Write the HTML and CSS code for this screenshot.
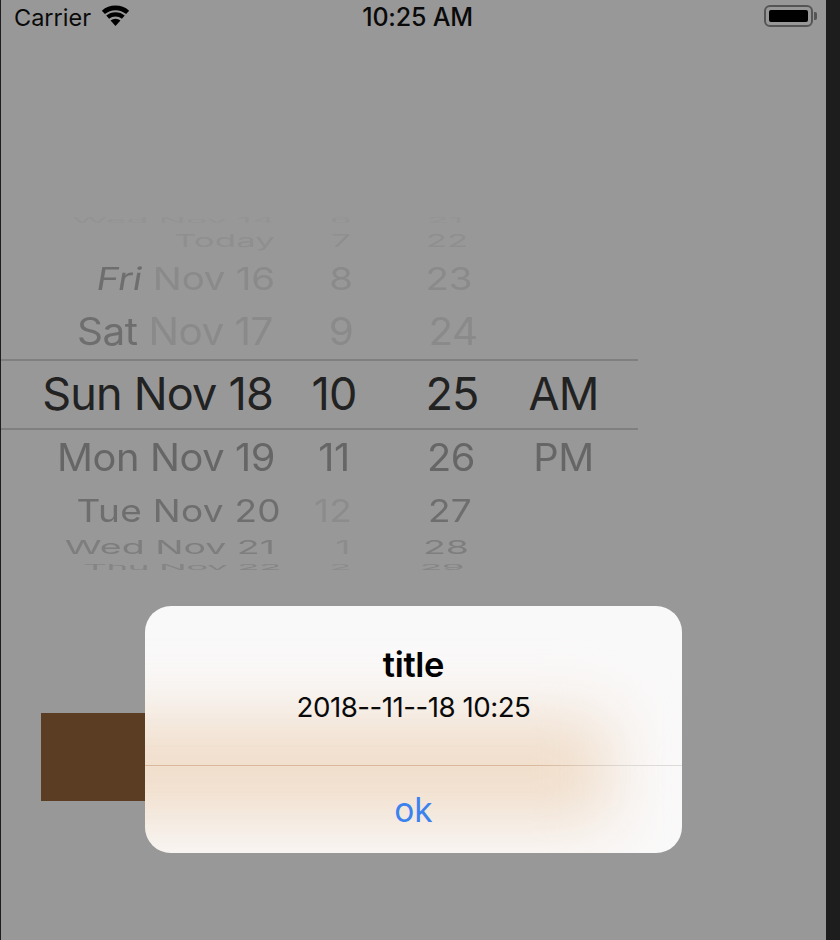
FILE: index.html
```html
<!DOCTYPE html>
<html lang="en">
<head>
<meta charset="utf-8">
<title>Date picker alert</title>
<link rel="stylesheet" href="styles.css">
</head>
<body>
<div class="screen">
  <header class="status">
    <div class="status-left">
      <span>Carrier</span>
      <svg class="wifi" viewBox="0 0 30 22" aria-hidden="true">
        <path d="M15 22 9.800 16.200a8 8 0 0 1 10.400 0z"/>
        <path d="M8.300 14.500 5.300 11.100a15 15 0 0 1 19.400 0l-3 3.400a10.500 10.500 0 0 0-13.400 0z"/>
        <path d="M3.900 9.500.7 5.900a22 22 0 0 1 28.600 0l-3.200 3.600a17.200 17.200 0 0 0-22.200 0z"/>
      </svg>
    </div>
    <div class="status-time">10:25 AM</div>
    <div class="status-right">
      <span class="battery"><span class="battery-fill"></span></span><span class="battery-tip"></span>
    </div>
  </header>

  <section class="picker">
    <div class="row r-clip-top">
      <span class="cell date faint">Wed Nov 14</span><span class="cell hour faint">6</span><span class="cell minute faint">21</span><span class="cell ampm"></span>
    </div>
    <div class="row r-today">
      <span class="cell date faint">Today</span><span class="cell hour faint">7</span><span class="cell minute faint">22</span><span class="cell ampm"></span>
    </div>
    <div class="row r-fri">
      <span class="cell date"><i class="day skew">Fri</i> <span class="mon">Nov 16</span></span><span class="cell hour mon">8</span><span class="cell minute mon">23</span><span class="cell ampm"></span>
    </div>
    <div class="row r-sat">
      <span class="cell date"><span class="day">Sat</span> <span class="mon">Nov 17</span></span><span class="cell hour mon">9</span><span class="cell minute mon">24</span><span class="cell ampm"></span>
    </div>
    <div class="row r-sel">
      <span class="cell date">Sun Nov 18</span><span class="cell hour">10</span><span class="cell minute">25</span><span class="cell ampm">AM</span>
    </div>
    <div class="row r-mon">
      <span class="cell date">Mon Nov 19</span><span class="cell hour">11</span><span class="cell minute">26</span><span class="cell ampm">PM</span>
    </div>
    <div class="row r-tue">
      <span class="cell date">Tue Nov 20</span><span class="cell hour light">12</span><span class="cell minute">27</span><span class="cell ampm"></span>
    </div>
    <div class="row r-wed">
      <span class="cell date">Wed Nov 21</span><span class="cell hour light">1</span><span class="cell minute">28</span><span class="cell ampm"></span>
    </div>
    <div class="row r-clip-bottom">
      <span class="cell date">Thu Nov 22</span><span class="cell hour light">2</span><span class="cell minute">29</span><span class="cell ampm"></span>
    </div>
  </section>

  <div class="block"></div>

  <div class="alert" role="alertdialog">
    <div class="alert-glow"></div>
    <div class="alert-body">
      <h1 class="alert-title">title</h1>
      <p class="alert-message">2018--11--18 10:25</p>
    </div>
    <div class="alert-divider"></div>
    <div class="alert-action">ok</div>
  </div>
</div>
</body>
</html>
```

FILE: styles.css
```css
* { box-sizing: border-box; }

html, body {
  margin: 0;
  height: 100%;
  background: #1d1d1d;
}

body {
  padding: 0 14px 0 1px;
  overflow: hidden;
  font-family: Inter, "Liberation Sans", sans-serif;
}

.screen {
  position: relative;
  height: 940px;
  background: #989898;
  color: #000;
}

/* Status bar */
.status {
  height: 34px;
  padding: 0 9px 0 13px;
  display: grid;
  grid-template-columns: 1fr auto 1fr;
  align-items: center;
  font-size: 23.5px;
  color: #0a0a0a;
}

.status-left {
  display: flex;
  align-items: center;
  gap: 10px;
}

.wifi {
  width: 29px;
  height: 21px;
  fill: #000;
  margin-top: -3px;
}

.status-time {
  font-size: 25px;
  font-weight: 500;
  letter-spacing: -.2px;
  transform: translateX(2px);
}

.status-right {
  display: flex;
  justify-content: flex-end;
  align-items: center;
  margin-top: -2px;
}

.battery {
  width: 49px;
  height: 22px;
  padding: 3px;
  border: 2px solid #555;
  border-radius: 6px;
  display: block;
}

.battery-fill {
  display: block;
  height: 100%;
  background: #000;
  border-radius: 2px;
}

.battery-tip {
  width: 3px;
  height: 8px;
  margin-left: 1px;
  background: #555;
  border-radius: 0 2px 2px 0;
}

/* Picker */
.picker {
  margin-top: 183px;
  width: 637px;
  height: 353px;
  overflow: hidden;
  font-size: 45px;
  color: #222;
  letter-spacing: -.8px;
}

.row {
  display: grid;
  grid-template-columns: 274px 118px 118px 127px;
  grid-template-rows: minmax(0, 1fr);
  align-items: center;
  white-space: nowrap;
  line-height: 1;
}

.cell { display: block; }
.date { text-align: right; }
.hour { text-align: center; }
.minute { text-align: center; }
.ampm { text-align: center; padding-right: 22px; }

.faint { color: #8f8f8f; }
.mon { color: #8a8a8a; }
.day { color: #6e6e6e; font-style: normal; }
.skew { display: inline-block; transform: skewX(-8deg); }
.light { color: #8c8c8c; }

.r-clip-top { height: 6px; font-size: 36px; letter-spacing: 0; }
.r-clip-top .cell { transform: scaleY(.2); color: #939393; }
.r-clip-top .hour { padding-left: 14px; }
.r-clip-top .minute { padding-right: 14px; }

.r-today { height: 34px; font-size: 35px; letter-spacing: 0; }
.r-today .cell { transform: scaleY(.5); }
.r-today .hour { padding-left: 14px; }
.r-today .minute { padding-right: 10px; }

.r-fri { height: 42px; font-size: 38.500px; letter-spacing: -.2px; }
.r-fri .cell { transform: scaleY(.82); }
.r-fri .hour { padding-left: 14px; }
.r-fri .minute { padding-right: 6px; }

.r-sat { height: 60px; padding-top: 6px; font-size: 40.500px; letter-spacing: -.5px; }
.r-sat .cell { transform: scaleY(.93); }
.r-sat .date { padding-right: 2px; }
.r-sat .hour { padding-left: 14px; }
.r-sat .minute { padding-left: 2px; }

.r-sel {
  height: 71px;
  padding-bottom: 2px;
  border-top: 2px solid #7f7f7f;
  border-bottom: 2px solid #7f7f7f;
}
.r-sel .date { padding-right: 2px; }

.r-mon { height: 55px; font-size: 39.800px; letter-spacing: -.4px; color: #666; }
.r-mon .cell { transform: scaleY(.95); }
.r-mon .minute { padding-right: 2px; }

.r-tue { height: 50px; font-size: 37px; letter-spacing: .3px; color: #6e6e6e; }
.r-tue .cell { transform: scaleY(.85); }
.r-tue .date { margin-right: -6px; }
.r-tue .hour { padding-right: 2px; }
.r-tue .minute { padding-right: 4px; }

.r-wed { height: 26px; font-size: 37.500px; letter-spacing: 0; color: #7e7e7e; }
.r-wed .cell { transform: scaleY(.5); }
.r-wed .hour { padding-left: 18px; }
.r-wed .minute { padding-right: 12px; }

.r-clip-bottom { height: 12px; font-size: 37px; letter-spacing: -.6px; color: #858585; }
.r-clip-bottom .cell { transform: scaleY(.22); }
.r-clip-bottom .date { margin-right: -6px; }
.r-clip-bottom .hour { padding-left: 12px; }
.r-clip-bottom .minute { padding-right: 20px; }

/* Brown block behind the alert */
.block {
  position: absolute;
  left: 40px;
  top: 713px;
  width: 560px;
  height: 88px;
  background: #5a3d23;
}

/* Alert */
.alert {
  position: absolute;
  left: 144px;
  top: 606px;
  width: 537px;
  height: 247px;
  border-radius: 26px;
  overflow: hidden;
  background: #faf9f9;
  display: flex;
  flex-direction: column;
}

.alert-glow {
  position: absolute;
  left: -80px;
  top: 110px;
  width: 545px;
  height: 106px;
  background: #f0ddca;
  filter: blur(32px);
}

.alert-body {
  position: relative;
  height: 159px;
  padding-top: 41px;
  text-align: center;
}

.alert-title {
  margin: 0;
  font-size: 34.500px;
  line-height: 36px;
  font-weight: 600;
  color: #000;
  letter-spacing: -.3px;
}

.alert-message {
  margin: 8px 0 0;
  font-size: 27.700px;
  line-height: 32px;
  color: #0a0a0a;
  letter-spacing: -.5px;
}

.alert-divider {
  position: relative;
  height: 1px;
  background: linear-gradient(90deg, #d9b79a 0, #d9b79a 72%, #dddad7 90%, #dddad7 100%);
}

.alert-action {
  position: relative;
  flex: 1;
  display: flex;
  align-items: center;
  justify-content: center;
  font-size: 33.500px;
  color: #3a82f0;
}
```
